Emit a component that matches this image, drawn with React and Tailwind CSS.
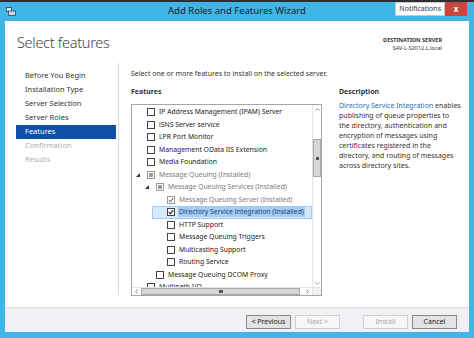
import { ChevronUp, ChevronDown, ChevronLeft, ChevronRight } from "lucide-react";

const nav = [
  { label: "Before You Begin" },
  { label: "Installation Type" },
  { label: "Server Selection" },
  { label: "Server Roles" },
  { label: "Features", active: true },
  { label: "Confirmation", disabled: true },
  { label: "Results", disabled: true },
];

const features = [
  { level: 0, text: "IP Address Management (IPAM) Server" },
  { level: 0, text: "iSNS Server service" },
  { level: 0, text: "LPR Port Monitor" },
  { level: 0, text: "Management OData IIS Extension" },
  { level: 0, text: "Media Foundation" },
  { level: 0, text: "Message Queuing (Installed)", state: "partial", expand: true, installed: true },
  { level: 1, text: "Message Queuing Services (Installed)", state: "partial", expand: true, installed: true },
  { level: 2, text: "Message Queuing Server (Installed)", state: "checked", installed: true },
  { level: 2, text: "Directory Service Integration (Installed)", state: "checked", selected: true },
  { level: 2, text: "HTTP Support" },
  { level: 2, text: "Message Queuing Triggers" },
  { level: 2, text: "Multicasting Support" },
  { level: 2, text: "Routing Service" },
  { level: 1, text: "Message Queuing DCOM Proxy" },
  { level: 0, text: "Multipath I/O" },
];

const description = [
  "publishing of queue properties to",
  "the directory, authentication and",
  "encryption of messages using",
  "certificates registered in the",
  "directory, and routing of messages",
  "across directory sites.",
];

const indent = ["w-[4px]", "w-[13px]", "w-[24px]"];

function Checkbox({ state, installed }) {
  return (
    <span
      className={
        "w-[8px] h-[8px] shrink-0 border bg-white flex items-center justify-center " +
        (installed ? "border-[#9a9a9a]" : "border-[#444]")
      }
    >
      {state === "checked" && (
        <svg width="6" height="6" viewBox="0 0 6 6">
          <path d="M0.8 3.1 L2.4 4.6 L5.2 1.2" fill="none" stroke={installed ? "#7a7a7a" : "#222"} strokeWidth="1.1" />
        </svg>
      )}
      {state === "partial" && <span className="w-[4px] h-[4px] bg-[#9a9a9a]" />}
    </span>
  );
}

function Expander() {
  return (
    <svg width="4" height="4" viewBox="0 0 4 4">
      <path d="M4 0 L4 4 L0 4 Z" fill="#333" />
    </svg>
  );
}

function FeatureRow({ item }) {
  const label = (
    <span
      className={
        "ml-[3px] whitespace-nowrap px-[1px] " +
        (item.selected ? "bg-[#a9cdf2] text-[#183d7a]" : item.installed ? "text-[#7a7a7a]" : "text-[#222]")
      }
    >
      {item.text}
    </span>
  );
  if (item.selected) {
    return (
      <div className="flex h-[12.5px] items-center">
        <span className="w-[20px] shrink-0" />
        <div className="flex h-full flex-1 items-center border border-[#9fcdf2] bg-[#d6eafb] pl-[14px]">
          <Checkbox state={item.state} />
          {label}
        </div>
      </div>
    );
  }
  return (
    <div className="flex h-[12.5px] items-center">
      <span className={indent[item.level] + " shrink-0"} />
      <span className="w-[11px] shrink-0 flex items-center">{item.expand && <Expander />}</span>
      <Checkbox state={item.state} installed={item.installed} />
      {label}
    </div>
  );
}

function Button({ children, disabled }) {
  return (
    <div
      className={
        "w-[45px] h-[14px] flex items-center justify-center border text-[7px] " +
        (disabled ? "border-[#cfcfcf] bg-[#f6f6f6] text-[#a8a8a8]" : "border-[#8a8a8a] bg-[#e3e3e3] text-[#222]")
      }
    >
      {children}
    </div>
  );
}

export default function App() {
  return (
    <div className="w-[474px] h-[338px] overflow-hidden bg-[#41b6e6] flex flex-col font-['Noto_Sans','Open_Sans',sans-serif]">
      <div className="h-[2px] bg-[#2c2f33]" />
      <div className="relative h-[19px] flex items-center justify-center">
        <div className="absolute left-[6px] top-[5px]">
          <svg width="10" height="9" viewBox="0 0 10 9">
            <rect x="0.5" y="0.5" width="5" height="4" fill="#dfe8ef" stroke="#2a4a66" strokeWidth="0.8" />
            <rect x="2.5" y="4" width="7" height="4.5" fill="#c9d6e2" stroke="#2a4a66" strokeWidth="0.8" />
          </svg>
        </div>
        <span className="text-[9.5px] text-[#1a1a1a]">Add Roles and Features Wizard</span>
        <div className="absolute right-[7px] top-0 flex h-[14px]">
          <div className="flex items-center border border-[#c8c8c8] bg-white px-[3px] text-[7px] text-[#333]">Notifications</div>
          <div className="flex w-[22px] items-center justify-center bg-[#c9463d] text-[8px] font-bold text-white">x</div>
        </div>
      </div>

      <div className="mx-[5px] flex flex-1 flex-col bg-white">
        <div className="flex h-[42px] justify-between pl-[12px] pr-[27px] pt-[14px]">
          <span className="text-[14.5px] font-light leading-none tracking-[-0.3px] text-[#444]">Select features</span>
          <div className="flex flex-col items-end pt-[1px] text-[5.5px] leading-[8px] text-[#333]">
            <span className="font-bold">DESTINATION SERVER</span>
            <span>SAV-L-S2012.L.local</span>
          </div>
        </div>

        <div className="flex h-[244px] pb-[12px]">
          <div className="w-[114px] shrink-0 border-r border-[#d6d6d6] pt-[6px]">
            {nav.map((n) => (
              <div
                key={n.label}
                className={
                  "ml-[11px] mr-[2px] flex h-[14px] items-center pl-[9px] text-[7.5px] " +
                  (n.active ? "bg-[#0f50a8] text-white" : n.disabled ? "text-[#b0b0b0]" : "text-[#333]")
                }
              >
                {n.label}
              </div>
            ))}
          </div>

          <div className="flex flex-1 pl-[12px] pt-[5px]">
            <div className="flex w-[191px] shrink-0 flex-col">
              <div className="h-[11px] whitespace-nowrap text-[7px] leading-[11px] text-[#333]">
                Select one or more features to install on the selected server.
              </div>
              <div className="mt-[8px] h-[10px] text-[7px] font-bold leading-[10px] text-[#333]">Features</div>
              <div className="mt-[7px] flex h-[192px] flex-col border border-[#a6a6a6]">
                <div className="flex flex-1 overflow-hidden">
                  <div className="flex-1 overflow-hidden pt-[1px] text-[6.8px]">
                    {features.map((f) => (
                      <FeatureRow key={f.text} item={f} />
                    ))}
                  </div>
                  <div className="flex w-[9px] flex-col border-l border-[#e2e2e2] bg-white">
                    <div className="flex h-[8px] items-center justify-center text-[#666]">
                      <ChevronUp size={7} strokeWidth={2.5} />
                    </div>
                    <div className="mt-[26px] flex h-[38px] items-center justify-center border border-[#a9a9a9] bg-[#d6d6d6]">
                      <span className="h-[3px] w-[3px] bg-[#555]" />
                    </div>
                    <div className="flex-1" />
                    <div className="flex h-[8px] items-center justify-center text-[#666]">
                      <ChevronDown size={7} strokeWidth={2.5} />
                    </div>
                  </div>
                </div>
                <div className="flex h-[8px] border-t border-[#e2e2e2]">
                  <div className="flex w-[9px] items-center justify-center text-[#555]">
                    <ChevronLeft size={7} strokeWidth={2.5} />
                  </div>
                  <div className="flex w-[159px] items-center justify-center border border-[#a9a9a9] bg-[#d6d6d6]">
                    <span className="h-[3px] w-[4px] bg-[#555]" />
                  </div>
                  <div className="flex-1" />
                  <div className="flex w-[9px] items-center justify-center text-[#555]">
                    <ChevronRight size={7} strokeWidth={2.5} />
                  </div>
                  <div className="w-[9px] border-l border-[#e2e2e2] bg-[#f0f0f0]" />
                </div>
              </div>
            </div>

            <div className="ml-[17px] flex w-[130px] flex-col pt-[19px] text-[7px] text-[#333]">
              <div className="h-[10px] font-bold leading-[10px]">Description</div>
              <div className="mt-[4px] leading-[10px]">
                <div className="whitespace-nowrap">
                  <span className="text-[#1f6fb2]">Directory Service Integration</span> enables
                </div>
                {description.map((line) => (
                  <div key={line} className="whitespace-nowrap">
                    {line}
                  </div>
                ))}
              </div>
            </div>
          </div>
        </div>

        <div className="flex flex-1 items-start justify-end gap-[4px] border-t border-[#dedede] bg-[#f2f0f4] pr-[12px] pt-[7px]">
          <Button>&lt; Previous</Button>
          <Button disabled>Next &gt;</Button>
          <div className="w-[15px]" />
          <Button disabled>Install</Button>
          <Button>Cancel</Button>
        </div>
      </div>
      <div className="h-[6px]" />
    </div>
  );
}
